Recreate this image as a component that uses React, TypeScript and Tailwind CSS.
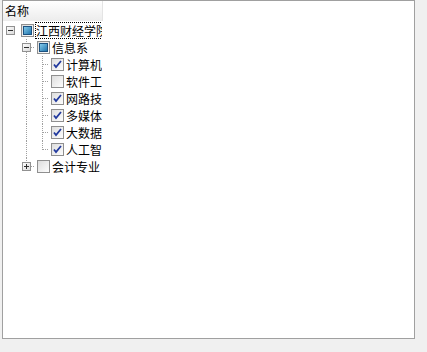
import React from "react";

type Check = "checked" | "unchecked" | "mixed";
type Slot = "none" | "pipe" | "tee" | "ell" | "minusRoot" | "minusTee" | "plusEll";

type Row = {
  label: string;
  slots: Slot[];
  check: Check;
  focused?: boolean;
};

const rows: Row[] = [
  { label: "江西财经学院", slots: ["minusRoot"], check: "mixed", focused: true },
  { label: "信息系", slots: ["none", "minusTee"], check: "mixed" },
  { label: "计算机科学", slots: ["none", "pipe", "tee"], check: "checked" },
  { label: "软件工程", slots: ["none", "pipe", "tee"], check: "unchecked" },
  { label: "网路技术", slots: ["none", "pipe", "tee"], check: "checked" },
  { label: "多媒体技术", slots: ["none", "pipe", "tee"], check: "checked" },
  { label: "大数据", slots: ["none", "pipe", "tee"], check: "checked" },
  { label: "人工智能", slots: ["none", "pipe", "ell"], check: "checked" },
  { label: "会计专业", slots: ["none", "plusEll"], check: "unchecked" },
];

const LINE = "#a0a0a0";

const Expander = ({ open }: { open: boolean }) => (
  <g>
    <rect x="3.5" y="4.5" width="8" height="8" fill="url(#expg)" stroke="#919191" />
    <line x1="5" y1="8.5" x2="10" y2="8.5" stroke="#2d2d2d" />
    {!open && <line x1="7.5" y1="6" x2="7.5" y2="11" stroke="#2d2d2d" />}
  </g>
);

// one 16px indent column of the tree, with its dotted lines and expander
const SlotCell = ({ kind, w = 16 }: { kind: Slot; w?: number }) => {
  const dash = { stroke: LINE, strokeDasharray: "1 1" };
  return (
    <svg width={w} height="17" className="shrink-0 block">
      <defs>
        <linearGradient id="expg" x1="0" y1="0" x2="1" y2="1">
          <stop offset="0" stopColor="#ffffff" />
          <stop offset="1" stopColor="#d8d8d8" />
        </linearGradient>
      </defs>
      {kind === "pipe" && <line x1="7.5" y1="0" x2="7.5" y2="17" {...dash} />}
      {kind === "tee" && (
        <>
          <line x1="7.5" y1="0" x2="7.5" y2="17" {...dash} />
          <line x1="8" y1="8.5" x2={w} y2="8.5" {...dash} />
        </>
      )}
      {kind === "ell" && (
        <>
          <line x1="7.5" y1="0" x2="7.5" y2="9" {...dash} />
          <line x1="8" y1="8.5" x2={w} y2="8.5" {...dash} />
        </>
      )}
      {kind === "minusRoot" && <Expander open />}
      {kind === "minusTee" && (
        <>
          <line x1="7.5" y1="0" x2="7.5" y2="4" {...dash} />
          <line x1="7.5" y1="13" x2="7.5" y2="17" {...dash} />
          <line x1="12" y1="8.5" x2={w} y2="8.5" {...dash} />
          <Expander open />
        </>
      )}
      {kind === "plusEll" && (
        <>
          <line x1="7.5" y1="0" x2="7.5" y2="4" {...dash} />
          <line x1="12" y1="8.5" x2={w} y2="8.5" {...dash} />
          <Expander open={false} />
        </>
      )}
    </svg>
  );
};

const CheckBox = ({ state }: { state: Check }) => (
  <svg width="13" height="13" className="shrink-0 block">
    <defs>
      <linearGradient id="cbg" x1="0" y1="0" x2="1" y2="1">
        <stop offset="0" stopColor="#dcdcdc" />
        <stop offset="1" stopColor="#ffffff" />
      </linearGradient>
      <linearGradient id="mixg" x1="0" y1="0" x2="1" y2="1">
        <stop offset="0" stopColor="#8ad0f0" />
        <stop offset="1" stopColor="#1a6fa8" />
      </linearGradient>
    </defs>
    <rect x="0.5" y="0.5" width="12" height="12" fill="url(#cbg)" stroke="#8f8f8f" />
    {state === "mixed" && (
      <rect x="2.5" y="2.5" width="8" height="8" fill="url(#mixg)" stroke="#1c5180" />
    )}
    {state === "checked" && (
      <path d="M3 6.5 L5 9 L10 3" fill="none" stroke="#21399e" strokeWidth="1.8" />
    )}
  </svg>
);

export default function App() {
  return (
    <div
      className="w-[427px] h-[352px] bg-[#f0f0f0] pl-[2px] pr-[12px] pb-[13px]"
      style={{ fontFamily: '"Noto Sans CJK SC", "Liberation Sans", sans-serif' }}
    >
      <div className="h-full border border-[#a0a0a0] bg-white flex flex-col">
        <div className="h-[20px] w-[100px] flex items-center pl-[2px] text-[12px] text-black bg-gradient-to-b from-white to-[#ececec] border-r border-[#e4e4e4]">
          名称
        </div>
        <div className="w-[99px] overflow-hidden pt-[1px]">
          {rows.map((row) => (
            <div key={row.label} className="h-[17px] flex items-center whitespace-nowrap">
              {row.slots.map((s, i) => (
                <SlotCell key={i} kind={s} w={i === 2 ? 14 : 16} />
              ))}
              <div className="ml-[2px]">
                <CheckBox state={row.check} />
              </div>
              <span
                className={
                  "ml-[1px] pr-[2px] h-[17px] leading-[15px] text-[12px] text-black border border-dotted " +
                  (row.focused ? "border-black" : "border-transparent")
                }
              >
                {row.label}
              </span>
            </div>
          ))}
        </div>
      </div>
    </div>
  );
}
